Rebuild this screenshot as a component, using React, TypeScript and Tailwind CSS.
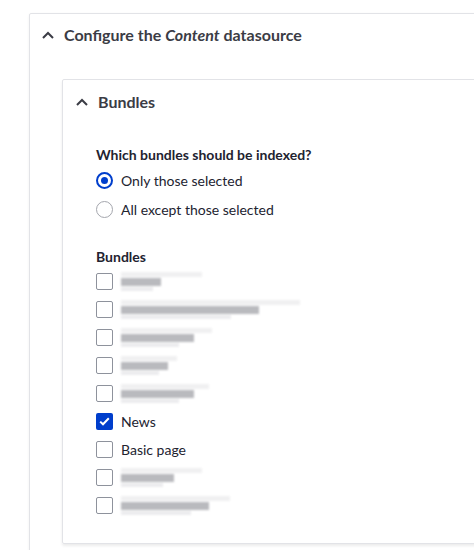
import { Fragment } from 'react';

const font = { fontFamily: 'Lato, "Noto Sans", sans-serif' };

type Bundle = { label?: string; checked?: boolean; blur?: number; faint?: number };

const bundles: Bundle[] = [
  { blur: 40, faint: 138 },
  { blur: 138, faint: 138 },
  { blur: 73, faint: 60 },
  { blur: 47, faint: 30 },
  { blur: 73, faint: 50 },
  { label: 'News', checked: true },
  { label: 'Basic page' },
  { blur: 53, faint: 93 },
  { blur: 88, faint: 70 },
];

function Chevron() {
  return (
    <svg width="12" height="8" viewBox="0 0 12 8" className="shrink-0 text-[#3b3c45]">
      <path d="M1 7 L6 2 L11 7" fill="none" stroke="currentColor" strokeWidth="2" />
    </svg>
  );
}

function Radio({ checked }: { checked?: boolean }) {
  return checked ? (
    <span className="w-[17px] h-[17px] rounded-full border-2 border-[#003ecc] flex items-center justify-center shrink-0">
      <span className="w-[7px] h-[7px] rounded-full bg-[#003ecc]" />
    </span>
  ) : (
    <span className="w-[17px] h-[17px] rounded-full border border-[#a4a6ad] shrink-0" />
  );
}

function Checkbox({ checked }: { checked?: boolean }) {
  return checked ? (
    <span className="w-[17px] h-[17px] rounded-[2px] bg-[#003ecc] flex items-center justify-center shrink-0">
      <svg width="11" height="9" viewBox="0 0 11 9">
        <path d="M1.2 4.6 L4 7.3 L9.8 1.3" fill="none" stroke="white" strokeWidth="2" />
      </svg>
    </span>
  ) : (
    <span className="w-[17px] h-[17px] rounded-[2px] border border-[#8e929c] bg-white shrink-0" />
  );
}

// blurred placeholder for redacted bundle names
function BlurLabel({ w, faint }: { w: number; faint: number }) {
  return (
    <span className="flex flex-col gap-[1px] blur-[1px]">
      <span className="h-[5px] bg-[#f0f0f1]" style={{ width: w + faint * 0.3 }} />
      <span className="h-[8px] bg-[#b9babe]" style={{ width: w }} />
      <span className="h-[4px] bg-[#ececee]" style={{ width: w * 0.8 }} />
    </span>
  );
}

export default function App() {
  return (
    <div className="w-[474px] h-[550px] overflow-hidden bg-white pt-[13px]" style={font}>
      <div className="ml-[29px] w-[470px] min-h-[560px] border border-[#e2e3e7] rounded-[2px] shadow-[0_1px_3px_rgba(0,0,0,0.06)]">
        {/* Outer details summary */}
        <div className="h-[44px] pb-[3px] flex items-center gap-[10px] pl-[12px] text-[16px] font-bold text-[#3b3c45]">
          <Chevron />
          <span>
            Configure the <em>Content</em> datasource
          </span>
        </div>

        <div className="pl-[32px] pt-[21px]">
          <div className="border border-[#e2e3e7] rounded-[2px] shadow-[0_2px_3px_rgba(0,0,0,0.08)]">
            {/* Inner summary */}
            <div className="h-[46px] pb-[2px] flex items-center gap-[10px] pl-[13px] text-[16px] font-bold text-[#3b3c45]">
              <Chevron />
              <span>Bundles</span>
            </div>

            <div className="pl-[33px] pt-[19px] pb-[24px] text-[14px] text-[#222330]">
              <div className="h-[20px] leading-[20px] font-bold">Which bundles should be indexed?</div>
              <div className="mt-[1px]">
                {['Only those selected', 'All except those selected'].map((t, i) => (
                  <div key={t} className="h-[29px] flex items-center gap-[8px]">
                    <Radio checked={i === 0} />
                    <span>{t}</span>
                  </div>
                ))}
              </div>

              <div className="mt-[23px] h-[20px] leading-[20px] font-bold">Bundles</div>
              <div>
                {bundles.map((b, i) => (
                  <Fragment key={i}>
                    <div className="h-[28px] flex items-center gap-[8px]">
                      <Checkbox checked={b.checked} />
                      {b.label ? (
                        <span>{b.label}</span>
                      ) : (
                        <BlurLabel w={b.blur ?? 40} faint={b.faint ?? 0} />
                      )}
                    </div>
                  </Fragment>
                ))}
              </div>
            </div>
          </div>
        </div>
      </div>
    </div>
  );
}
